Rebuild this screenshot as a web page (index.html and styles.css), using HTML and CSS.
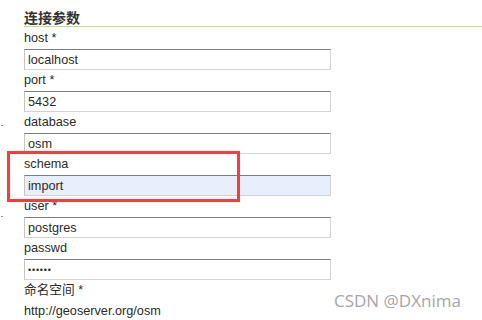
FILE: index.html
```html
<!DOCTYPE html>
<html>
<head>
<meta charset="utf-8">
<link rel="stylesheet" href="styles.css">
</head>
<body>
<div class="page">
  <h2 class="section-title">连接参数</h2>
  <div class="field">
    <label class="field-label">host *</label>
    <input class="field-input" type="text" value="localhost">
  </div>
  <div class="field">
    <label class="field-label">port *</label>
    <input class="field-input" type="text" value="5432">
  </div>
  <div class="field">
    <label class="field-label">database</label>
    <input class="field-input" type="text" value="osm">
  </div>
  <div class="field">
    <label class="field-label">schema</label>
    <input class="field-input field-input--filled" type="text" value="import">
  </div>
  <div class="field">
    <label class="field-label">user *</label>
    <input class="field-input" type="text" value="postgres">
  </div>
  <div class="field">
    <label class="field-label">passwd</label>
    <input class="field-input field-input--password" type="password" value="123456">
  </div>
  <div class="field">
    <div class="field-label">命名空间 *</div>
    <div class="field-value">http://geoserver.org/osm</div>
  </div>
</div>
<div class="highlight-box"></div>
<span class="edge-mark edge-mark--a"></span>
<span class="edge-mark edge-mark--b"></span>
<div class="watermark">CSDN @DXnima</div>
</body>
</html>
```

FILE: styles.css
```css
html, body {
  margin: 0;
  padding: 0;
  background: #ffffff;
}
body {
  width: 482px;
  height: 320px;
  overflow: hidden;
  position: relative;
  font-family: "Liberation Sans", Arial, "Noto Sans CJK SC", sans-serif;
  font-size: 12.7px;
  color: #2b2b2b;
}
.page {
  padding-left: 24px;
}
.section-title {
  margin: 0;
  padding-top: 8px;
  height: 18px;
  line-height: 18px;
  font-size: 14px;
  font-weight: bold;
  color: #333333;
  border-bottom: 1px solid #c3df92;
  font-family: "Noto Sans CJK SC", sans-serif;
}
.field {
  display: flex;
  flex-direction: column;
  margin-top: 1px;
}
.field + .field {
  margin-top: 0;
}
.field-label {
  display: block;
  height: 21px;
  line-height: 21px;
}
.field-input {
  box-sizing: border-box;
  width: 307px;
  height: 21px;
  margin: 0;
  padding: 0 3px;
  border: 1px solid #d3d3d3;
  border-top-color: #7d7d7d;
  border-left-color: #c4c4c4;
  background: #ffffff;
  font-family: "Liberation Sans", Arial, sans-serif;
  font-size: 12.7px;
  color: #2b2b2b;
  outline: none;
}
.field-input--filled {
  background: #e8effc;
}
.field-input--password {
  font-size: 9px;
  letter-spacing: 0.8px;
}
.field-value {
  height: 21px;
  line-height: 21px;
}
.highlight-box {
  position: absolute;
  left: 7px;
  top: 151px;
  width: 227px;
  height: 45px;
  border: 3px solid #fa3b3b;
}
.edge-mark {
  position: absolute;
  left: 1px;
  width: 2px;
  height: 1px;
  background: #9a9a9a;
}
.edge-mark--a { top: 125px; }
.edge-mark--b { top: 216px; }
.watermark {
  position: absolute;
  left: 334px;
  top: 290px;
  font-family: "Open Sans", "Noto Sans", sans-serif;
  font-size: 17px;
  color: #a6a6a6;
  line-height: 22px;
}
```
